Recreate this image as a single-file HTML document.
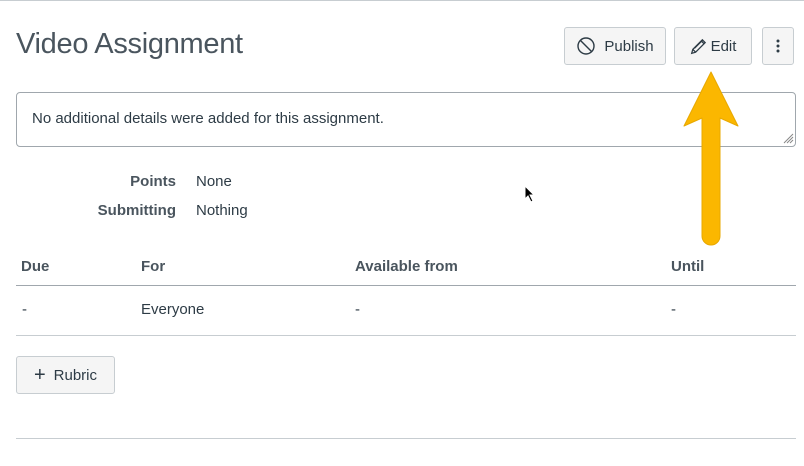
<!DOCTYPE html><html><head><style>
body{margin:0;width:804px;height:466px;background:#fff;font-family:"Liberation Sans",sans-serif;color:#2d3b45;position:relative;overflow:hidden}
.a{position:absolute}
.btn{position:absolute;background:#f5f5f5;border:1px solid #c7cdd1;border-radius:3px;box-sizing:border-box;font-size:15px;color:#2d3b45;display:flex;align-items:center;justify-content:center}
.t{font-size:15px;position:absolute;white-space:nowrap}
</style></head><body>
<div class="a" style="left:0;top:0;width:804px;height:1px;background:#c7cdd1"></div>
<div class="a" style="left:16px;top:28px;font-size:29px;color:#4a555e;letter-spacing:-0.3px">Video Assignment</div>
<div class="btn" style="left:564px;top:27px;width:102px;height:38px"><svg width="20" height="20" viewBox="0 0 20 20" style="margin-right:8px"><circle cx="10" cy="10" r="8" fill="none" stroke="#2d3b45" stroke-width="1.4"/><line x1="4.5" y1="4.5" x2="15.5" y2="15.5" stroke="#2d3b45" stroke-width="1.4"/></svg>Publish</div>
<div class="btn" style="left:674px;top:27px;width:78px;height:38px"><svg width="18" height="18" viewBox="0 0 16 16" style="margin-right:3px"><path d="M1.5 14.5l1-3.5 8.5-8.5 2.5 2.5-8.5 8.5z M2.5 11l2.5 2.5 M10 3.5l2.5 2.5 M4 10l7-7" fill="none" stroke="#2d3b45" stroke-width="1.1"/></svg>Edit</div>
<div class="btn" style="left:762px;top:27px;width:32px;height:38px"><svg width="4" height="16"><circle cx="2" cy="3" r="1.5" fill="#2d3b45"/><circle cx="2" cy="8" r="1.5" fill="#2d3b45"/><circle cx="2" cy="13" r="1.5" fill="#2d3b45"/></svg></div>
<div class="a" style="left:16px;top:92px;width:780px;height:55px;border:1px solid #a0a7ad;border-radius:4px;box-sizing:border-box"></div>
<svg class="a" style="left:782px;top:132px" width="12" height="12"><path d="M11 2L2 11M11 5L5 11M11 8L8 11" stroke="#888" stroke-width="1"/></svg>
<div class="t" style="left:32px;top:110px">No additional details were added for this assignment.</div>
<div class="t" style="right:628px;top:173px;font-weight:bold;color:#4a555e">Points</div>
<div class="t" style="left:196px;top:173px">None</div>
<div class="t" style="right:628px;top:202px;font-weight:bold;color:#4a555e">Submitting</div>
<div class="t" style="left:196px;top:202px">Nothing</div>
<div class="t" style="left:21px;top:258px;font-weight:bold;color:#4a555e">Due</div>
<div class="t" style="left:141px;top:258px;font-weight:bold;color:#4a555e">For</div>
<div class="t" style="left:355px;top:258px;font-weight:bold;color:#4a555e">Available from</div>
<div class="t" style="left:671px;top:258px;font-weight:bold;color:#4a555e">Until</div>
<div class="a" style="left:16px;top:285px;width:780px;height:1px;background:#a0a7ad"></div>
<div class="t" style="left:22px;top:301px">-</div>
<div class="t" style="left:141px;top:301px">Everyone</div>
<div class="t" style="left:355px;top:301px">-</div>
<div class="t" style="left:671px;top:301px">-</div>
<div class="a" style="left:16px;top:335px;width:780px;height:1px;background:#c7cdd1"></div>
<div class="btn" style="left:16px;top:356px;width:99px;height:38px"><span style="font-size:20px;margin-right:8px;font-weight:300">+</span>Rubric</div>
<div class="a" style="left:16px;top:438px;width:780px;height:1px;background:#c7cdd1"></div>
<svg class="a" style="left:680px;top:68px" width="66" height="182"><path d="M31 4 L58 58 L40 50 L40 168 A9 9 0 0 1 22 168 L22 50 L4 58 Z" fill="#fbb700" stroke="#e8a800" stroke-width="1" stroke-linejoin="round"/></svg>
<svg class="a" style="left:524px;top:185px" width="12" height="18"><path d="M1 1 L1 14 L4 11 L7 17 L9 16 L6 10 L10 10 Z" fill="#000" stroke="#fff" stroke-width="1"/></svg>
</body></html>
